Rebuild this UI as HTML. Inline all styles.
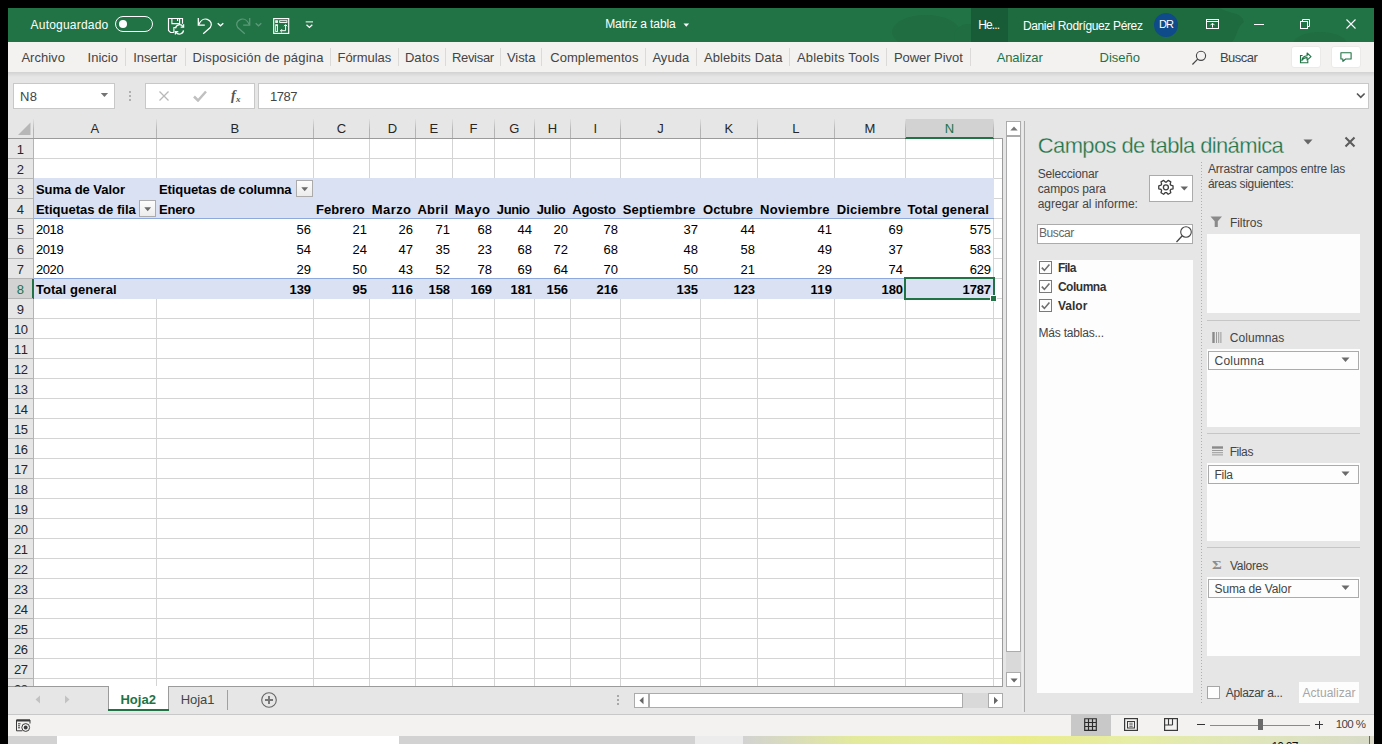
<!DOCTYPE html>
<html lang="es"><head><meta charset="utf-8"><title>Matriz a tabla - Excel</title>
<style>
html,body{margin:0;padding:0;background:#000;}
body{width:1382px;height:744px;overflow:hidden;position:relative;font-family:"Liberation Sans",sans-serif;}
#win{position:absolute;left:0;top:0;width:1382px;height:744px;overflow:hidden;}
#win div,#win span,#win svg{position:absolute;box-sizing:border-box;}
.t{white-space:pre;}

</style></head>
<body>
<div id=win>
<div style="left:8px;top:8px;width:1366px;height:728px;background:#e6e6e6;"></div>
<div style="left:8px;top:8px;width:1366px;height:34px;background:#217346;"></div>
<svg style="left:880px;top:8px;" width="494" height="34" viewBox="0 0 494 34"><ellipse cx='46' cy='24' rx='34' ry='17' fill='#1f6d41'/><circle cx='88' cy='30' r='14' fill='#1f6d41'/><path d='M128 0H340c10 6 22 4 24 14c-8 6-6 14-12 20H128z' fill='#1f6b40'/><ellipse cx='440' cy='38' rx='28' ry='14' fill='#1f6d41'/></svg>
<div style="left:971px;top:8px;width:37px;height:34px;background:#185c37;"></div>
<div style="left:115.3px;top:16px;width:37.5px;height:16px;border:1px solid #fff;border-radius:8px;"></div>
<div style="left:119px;top:20px;width:8px;height:8px;background:#fff;border-radius:50%;"></div>
<svg style="left:160px;top:10px;" width="160" height="30" viewBox="0 0 160 30"><path d='M13.900 22.500h-3.400l-2-2V8.500h14v5.300' fill='none' stroke='#fff' stroke-width='1.15'/><path d='M11.900 8.500v5.100h7.700v-5.100M17.600 8.500v2.600' fill='none' stroke='#fff' stroke-width='1.15'/><path d='M13.900 22.500v-5h2.300' fill='none' stroke='#fff' stroke-width='1.15'/><path d='M15.500 18.400a4.100 4.100 0 0 1 7.600-1.700M23.500 20.400a4.100 4.100 0 0 1-7.600 1.700' fill='none' stroke='#fff' stroke-width='1.250'/><path d='M23.600 14.200v2.900h-2.900M15.400 24.600v-2.900h2.900' fill='none' stroke='#fff' stroke-width='1.250'/><path d='M38.300 8v7h6.500' fill='none' stroke='#fff' stroke-width='1.250'/><path d='M38.800 14.500C40.500 10.500 44 8.300 47.300 9.300c3.800 1.300 5.200 5.200 3 8.200L43.200 23.700' fill='none' stroke='#fff' stroke-width='1.250'/><path d='M57.700 13.200l2.800 2.600 2.800-2.600' fill='none' stroke='#fff' stroke-width='1.300'/><path d='M89.700 8v7h-6.500' fill='none' stroke='#5c9977' stroke-width='1.250'/><path d='M89.200 14.500C87.500 10.500 84 8.300 80.700 9.300c-3.800 1.300-5.200 5.200-3 8.200L84.800 23.700' fill='none' stroke='#5c9977' stroke-width='1.250'/><path d='M95.700 13.200l2.800 2.600 2.800-2.600' fill='none' stroke='#5c9977' stroke-width='1.300'/><rect x='113.700' y='8.600' width='15' height='14.800' fill='none' stroke='#fff' stroke-width='1.15'/><rect x='115.700' y='10.700' width='1.800' height='1.800' fill='none' stroke='#fff' stroke-width='.9'/><rect x='119.700' y='10.700' width='7.200' height='1.800' fill='none' stroke='#fff' stroke-width='.9'/><rect x='115.700' y='14.700' width='1.800' height='6.800' fill='none' stroke='#fff' stroke-width='.9'/><path d='M125.600 15v5.700h-4.800M124 16.200l1.600-1.600 1.600 1.600M122 19.200l-1.600 1.600 1.600 1.600' fill='none' stroke='#fff' stroke-width='1'/><path d='M145.700 11.900h7.300' stroke='#fff' stroke-width='1'/><path d='M146.500 14.700l2.900 2.700 2.900-2.700' fill='none' stroke='#fff' stroke-width='1.300'/></svg>
<svg style="left:682.5px;top:22.5px;" width="8" height="5" viewBox="0 0 8 5"><path d='M0.5 0.5h5.600l-2.800 3.300z' fill='#fff'/></svg>
<div style="left:1154px;top:13px;width:24px;height:24px;background:#0f4a8a;border-radius:50%;"></div>
<svg style="left:1205px;top:18px;" width="16" height="12" viewBox="0 0 16 12"><rect x='1.5' y='1.5' width='12' height='9' fill='none' stroke='#fff' stroke-width='1'/><path d='M1.5 3.5h12' stroke='#fff'/><path d='M7.5 9.5v-4M5.5 7.2l2-2 2 2' fill='none' stroke='#fff'/></svg>
<div style="left:1254px;top:23.5px;width:10px;height:1px;background:#fff;"></div>
<svg style="left:1299px;top:18px;" width="12" height="12" viewBox="0 0 12 12"><rect x='1.5' y='3.5' width='7' height='7' fill='none' stroke='#fff'/><path d='M3.5 3.5v-2h7v7h-2' fill='none' stroke='#fff'/></svg>
<svg style="left:1345px;top:18px;" width="12" height="12" viewBox="0 0 12 12"><path d='M1.5 1.5l9 9M10.5 1.5l-9 9' stroke='#fff' stroke-width='1.1'/></svg>
<div style="left:8px;top:42px;width:1366px;height:30px;background:#f3f2f1;"></div>
<div style="left:8px;top:72px;width:1366px;height:5px;background:linear-gradient(#d2d2d2,#e6e6e6);"></div>
<div style="left:125px;top:48px;width:1px;height:18px;background:#dcdad8;"></div>
<div style="left:185px;top:48px;width:1px;height:18px;background:#dcdad8;"></div>
<div style="left:330px;top:48px;width:1px;height:18px;background:#dcdad8;"></div>
<div style="left:398px;top:48px;width:1px;height:18px;background:#dcdad8;"></div>
<div style="left:445px;top:48px;width:1px;height:18px;background:#dcdad8;"></div>
<div style="left:500px;top:48px;width:1px;height:18px;background:#dcdad8;"></div>
<div style="left:541px;top:48px;width:1px;height:18px;background:#dcdad8;"></div>
<div style="left:645px;top:48px;width:1px;height:18px;background:#dcdad8;"></div>
<div style="left:696px;top:48px;width:1px;height:18px;background:#dcdad8;"></div>
<div style="left:789px;top:48px;width:1px;height:18px;background:#dcdad8;"></div>
<div style="left:886px;top:48px;width:1px;height:18px;background:#dcdad8;"></div>
<div style="left:970px;top:48px;width:1px;height:18px;background:#dcdad8;"></div>
<svg style="left:1190px;top:48px;" width="18" height="18" viewBox="0 0 18 18"><circle cx='11' cy='7.800' r='4.600' fill='none' stroke='#444' stroke-width='1.100'/><path d='M7.700 11.200L2.400 16.500' stroke='#444' stroke-width='1.200'/></svg>
<div style="left:1291px;top:46px;width:30px;height:22px;background:#fff;border:1px solid #eceae8;border-radius:3px;"></div>
<div style="left:1330.5px;top:46px;width:30.5px;height:22px;background:#fff;border:1px solid #eceae8;border-radius:3px;"></div>
<svg style="left:1298px;top:50px;" width="16" height="15" viewBox="0 0 16 15"><path d='M4.600 5.500H2.500v7.300h7.300V10.200' fill='none' stroke='#217346' stroke-width='1.1'/><path d='M3.700 10.800c.4-3.200 2.200-4.800 5.400-5V3l3.900 3.600-3.900 3.600V7.600C6.300 7.700 4.700 8.600 3.700 10.800z' fill='none' stroke='#217346' stroke-width='1.1' stroke-linejoin='round'/></svg>
<svg style="left:1338px;top:50px;" width="16" height="15" viewBox="0 0 16 15"><path d='M2.900 2.700h10.200v6.300H7.600l-2.700 2.400V9H2.900z' fill='none' stroke='#217346' stroke-width='1.1' stroke-linejoin='round'/></svg>
<div style="left:13px;top:83px;width:102px;height:26px;background:#fff;border:1px solid #c8c8c8;"></div>
<svg style="left:100px;top:92px;" width="10" height="6" viewBox="0 0 10 6"><path d='M0.800 0.900h7.300l-3.650 4.100z' fill='#737373'/></svg>
<div style="left:129px;top:91px;width:2px;height:2px;background:#b0b0b0;"></div>
<div style="left:129px;top:95px;width:2px;height:2px;background:#b0b0b0;"></div>
<div style="left:129px;top:99px;width:2px;height:2px;background:#b0b0b0;"></div>
<div style="left:145px;top:83px;width:110px;height:26px;background:#fff;border:1px solid #c8c8c8;"></div>
<svg style="left:158px;top:90px;" width="12" height="12" viewBox="0 0 12 12"><path d='M1.500 1.500l9 9M10.500 1.500l-9 9' stroke='#b8b8b8' stroke-width='1.3'/></svg>
<svg style="left:193px;top:90px;" width="14" height="12" viewBox="0 0 14 12"><path d='M1 6.500l4 4L13 1.500' fill='none' stroke='#c0c0c0' stroke-width='2.500'/></svg>
<div style="left:258px;top:83px;width:1111px;height:26px;background:#fff;border:1px solid #c8c8c8;"></div>
<svg style="left:1356px;top:92px;" width="10" height="8" viewBox="0 0 10 8"><path d='M1 1.500l3.800 3.800L8.600 1.500' fill='none' stroke='#555' stroke-width='1.600'/></svg>
<div style="left:8px;top:119px;width:995px;height:568px;background:#e6e6e6;"></div>
<div style="left:34px;top:139px;width:969px;height:547px;background:#fff;"></div>
<div style="left:34px;top:158px;width:969px;height:1px;background:#d4d4d4;"></div>
<div style="left:34px;top:178px;width:969px;height:1px;background:#d4d4d4;"></div>
<div style="left:34px;top:198px;width:969px;height:1px;background:#d4d4d4;"></div>
<div style="left:34px;top:218px;width:969px;height:1px;background:#d4d4d4;"></div>
<div style="left:34px;top:238px;width:969px;height:1px;background:#d4d4d4;"></div>
<div style="left:34px;top:258px;width:969px;height:1px;background:#d4d4d4;"></div>
<div style="left:34px;top:278px;width:969px;height:1px;background:#d4d4d4;"></div>
<div style="left:34px;top:298px;width:969px;height:1px;background:#d4d4d4;"></div>
<div style="left:34px;top:318px;width:969px;height:1px;background:#d4d4d4;"></div>
<div style="left:34px;top:338px;width:969px;height:1px;background:#d4d4d4;"></div>
<div style="left:34px;top:358px;width:969px;height:1px;background:#d4d4d4;"></div>
<div style="left:34px;top:378px;width:969px;height:1px;background:#d4d4d4;"></div>
<div style="left:34px;top:398px;width:969px;height:1px;background:#d4d4d4;"></div>
<div style="left:34px;top:418px;width:969px;height:1px;background:#d4d4d4;"></div>
<div style="left:34px;top:438px;width:969px;height:1px;background:#d4d4d4;"></div>
<div style="left:34px;top:458px;width:969px;height:1px;background:#d4d4d4;"></div>
<div style="left:34px;top:478px;width:969px;height:1px;background:#d4d4d4;"></div>
<div style="left:34px;top:498px;width:969px;height:1px;background:#d4d4d4;"></div>
<div style="left:34px;top:518px;width:969px;height:1px;background:#d4d4d4;"></div>
<div style="left:34px;top:538px;width:969px;height:1px;background:#d4d4d4;"></div>
<div style="left:34px;top:558px;width:969px;height:1px;background:#d4d4d4;"></div>
<div style="left:34px;top:578px;width:969px;height:1px;background:#d4d4d4;"></div>
<div style="left:34px;top:598px;width:969px;height:1px;background:#d4d4d4;"></div>
<div style="left:34px;top:618px;width:969px;height:1px;background:#d4d4d4;"></div>
<div style="left:34px;top:638px;width:969px;height:1px;background:#d4d4d4;"></div>
<div style="left:34px;top:658px;width:969px;height:1px;background:#d4d4d4;"></div>
<div style="left:34px;top:678px;width:969px;height:1px;background:#d4d4d4;"></div>
<div style="left:156px;top:139px;width:1px;height:547px;background:#d4d4d4;"></div>
<div style="left:313px;top:139px;width:1px;height:547px;background:#d4d4d4;"></div>
<div style="left:369px;top:139px;width:1px;height:547px;background:#d4d4d4;"></div>
<div style="left:415px;top:139px;width:1px;height:547px;background:#d4d4d4;"></div>
<div style="left:452px;top:139px;width:1px;height:547px;background:#d4d4d4;"></div>
<div style="left:494px;top:139px;width:1px;height:547px;background:#d4d4d4;"></div>
<div style="left:534px;top:139px;width:1px;height:547px;background:#d4d4d4;"></div>
<div style="left:570px;top:139px;width:1px;height:547px;background:#d4d4d4;"></div>
<div style="left:620px;top:139px;width:1px;height:547px;background:#d4d4d4;"></div>
<div style="left:700px;top:139px;width:1px;height:547px;background:#d4d4d4;"></div>
<div style="left:757px;top:139px;width:1px;height:547px;background:#d4d4d4;"></div>
<div style="left:834px;top:139px;width:1px;height:547px;background:#d4d4d4;"></div>
<div style="left:905px;top:139px;width:1px;height:547px;background:#d4d4d4;"></div>
<div style="left:993px;top:139px;width:1px;height:547px;background:#d4d4d4;"></div>
<div style="left:34px;top:178px;width:960px;height:41px;background:#d9e1f2;"></div>
<div style="left:34px;top:219px;width:959px;height:60px;background:#fff;"></div>
<div style="left:34px;top:279px;width:960px;height:20px;background:#d9e1f2;"></div>
<div style="left:34px;top:218px;width:960px;height:1px;background:#8ea9db;"></div>
<div style="left:34px;top:278px;width:960px;height:1px;background:#8ea9db;"></div>
<div style="left:905px;top:119px;width:89px;height:18px;background:#d2d2d2;"></div>
<div style="left:905px;top:137px;width:89px;height:2px;background:#217346;"></div>
<div style="left:8px;top:138px;width:897px;height:1px;background:#9b9b9b;"></div>
<div style="left:994px;top:138px;width:9px;height:1px;background:#9b9b9b;"></div>
<div style="left:33px;top:119px;width:1px;height:19px;background:linear-gradient(#e0e0e0,#b4b4b4 55%);"></div>
<div style="left:156px;top:119px;width:1px;height:19px;background:linear-gradient(#e0e0e0,#b4b4b4 55%);"></div>
<div style="left:313px;top:119px;width:1px;height:19px;background:linear-gradient(#e0e0e0,#b4b4b4 55%);"></div>
<div style="left:369px;top:119px;width:1px;height:19px;background:linear-gradient(#e0e0e0,#b4b4b4 55%);"></div>
<div style="left:415px;top:119px;width:1px;height:19px;background:linear-gradient(#e0e0e0,#b4b4b4 55%);"></div>
<div style="left:452px;top:119px;width:1px;height:19px;background:linear-gradient(#e0e0e0,#b4b4b4 55%);"></div>
<div style="left:494px;top:119px;width:1px;height:19px;background:linear-gradient(#e0e0e0,#b4b4b4 55%);"></div>
<div style="left:534px;top:119px;width:1px;height:19px;background:linear-gradient(#e0e0e0,#b4b4b4 55%);"></div>
<div style="left:570px;top:119px;width:1px;height:19px;background:linear-gradient(#e0e0e0,#b4b4b4 55%);"></div>
<div style="left:620px;top:119px;width:1px;height:19px;background:linear-gradient(#e0e0e0,#b4b4b4 55%);"></div>
<div style="left:700px;top:119px;width:1px;height:19px;background:linear-gradient(#e0e0e0,#b4b4b4 55%);"></div>
<div style="left:757px;top:119px;width:1px;height:19px;background:linear-gradient(#e0e0e0,#b4b4b4 55%);"></div>
<div style="left:834px;top:119px;width:1px;height:19px;background:linear-gradient(#e0e0e0,#b4b4b4 55%);"></div>
<div style="left:905px;top:119px;width:1px;height:19px;background:linear-gradient(#e0e0e0,#b4b4b4 55%);"></div>
<div style="left:993px;top:119px;width:1px;height:19px;background:linear-gradient(#e0e0e0,#b4b4b4 55%);"></div>
<svg style="left:17px;top:122px;" width="15" height="14" viewBox="0 0 15 14"><path d='M13.500 0.500v12.500H1z' fill='#b7b7b7'/></svg>
<div style="left:8px;top:279px;width:24px;height:19px;background:#d2d2d2;"></div>
<div style="left:32px;top:279px;width:2px;height:20px;background:#217346;"></div>
<div style="left:33px;top:139px;width:1px;height:140px;background:#b4b4b4;"></div>
<div style="left:33px;top:299px;width:1px;height:387px;background:#b4b4b4;"></div>
<div style="left:8px;top:158px;width:25px;height:1px;background:#b4b4b4;"></div>
<div style="left:8px;top:178px;width:25px;height:1px;background:#b4b4b4;"></div>
<div style="left:8px;top:198px;width:25px;height:1px;background:#b4b4b4;"></div>
<div style="left:8px;top:218px;width:25px;height:1px;background:#b4b4b4;"></div>
<div style="left:8px;top:238px;width:25px;height:1px;background:#b4b4b4;"></div>
<div style="left:8px;top:258px;width:25px;height:1px;background:#b4b4b4;"></div>
<div style="left:8px;top:278px;width:25px;height:1px;background:#b4b4b4;"></div>
<div style="left:8px;top:298px;width:25px;height:1px;background:#b4b4b4;"></div>
<div style="left:8px;top:318px;width:25px;height:1px;background:#b4b4b4;"></div>
<div style="left:8px;top:338px;width:25px;height:1px;background:#b4b4b4;"></div>
<div style="left:8px;top:358px;width:25px;height:1px;background:#b4b4b4;"></div>
<div style="left:8px;top:378px;width:25px;height:1px;background:#b4b4b4;"></div>
<div style="left:8px;top:398px;width:25px;height:1px;background:#b4b4b4;"></div>
<div style="left:8px;top:418px;width:25px;height:1px;background:#b4b4b4;"></div>
<div style="left:8px;top:438px;width:25px;height:1px;background:#b4b4b4;"></div>
<div style="left:8px;top:458px;width:25px;height:1px;background:#b4b4b4;"></div>
<div style="left:8px;top:478px;width:25px;height:1px;background:#b4b4b4;"></div>
<div style="left:8px;top:498px;width:25px;height:1px;background:#b4b4b4;"></div>
<div style="left:8px;top:518px;width:25px;height:1px;background:#b4b4b4;"></div>
<div style="left:8px;top:538px;width:25px;height:1px;background:#b4b4b4;"></div>
<div style="left:8px;top:558px;width:25px;height:1px;background:#b4b4b4;"></div>
<div style="left:8px;top:578px;width:25px;height:1px;background:#b4b4b4;"></div>
<div style="left:8px;top:598px;width:25px;height:1px;background:#b4b4b4;"></div>
<div style="left:8px;top:618px;width:25px;height:1px;background:#b4b4b4;"></div>
<div style="left:8px;top:638px;width:25px;height:1px;background:#b4b4b4;"></div>
<div style="left:8px;top:658px;width:25px;height:1px;background:#b4b4b4;"></div>
<div style="left:8px;top:678px;width:25px;height:1px;background:#b4b4b4;"></div>
<div style="left:296px;top:180px;width:17px;height:17px;border:1px solid #ababab;background:linear-gradient(#fdfdfd,#ececec);"></div>
<svg style="left:301px;top:187px;" width="8" height="5" viewBox="0 0 8 5"><path d='M0.300 0.300h6.800l-3.400 4z' fill='#6a6a6a'/></svg>
<div style="left:139px;top:200px;width:17px;height:17px;border:1px solid #ababab;background:linear-gradient(#fdfdfd,#ececec);"></div>
<svg style="left:144px;top:207px;" width="8" height="5" viewBox="0 0 8 5"><path d='M0.300 0.300h6.800l-3.400 4z' fill='#6a6a6a'/></svg>
<div style="left:904px;top:277px;width:91px;height:23px;border:2px solid #217346;"></div>
<div style="left:990px;top:295px;width:7px;height:7px;background:#217346;border:1px solid #fff;"></div>
<div style="left:1002px;top:139px;width:1px;height:548px;background:#9b9b9b;"></div>
<div style="left:8px;top:686px;width:995px;height:1px;background:#9b9b9b;"></div>
<div style="left:1006px;top:121px;width:15px;height:15px;background:#fff;border:1px solid #ababab;"></div>
<svg style="left:1009.5px;top:125.5px;" width="9" height="6" viewBox="0 0 9 6"><path d='M0.300 4.500l3.700-4.100 3.700 4.100z' fill='#777'/></svg>
<div style="left:1006px;top:136px;width:15px;height:516px;background:#fff;border:1px solid #ababab;"></div>
<div style="left:1006px;top:652px;width:15px;height:20px;background:#d9d9d9;"></div>
<div style="left:1006px;top:672px;width:15px;height:15px;background:#fff;border:1px solid #ababab;"></div>
<svg style="left:1009.5px;top:677.5px;" width="9" height="6" viewBox="0 0 9 6"><path d='M0.500 0.400h7.200l-3.600 4z' fill='#686868'/></svg>
<div style="left:1024px;top:121px;width:1px;height:591px;background:#ababab;z-index:2;"></div>
<div style="left:1022px;top:121px;width:1px;height:591px;background:#ebebeb;z-index:2;"></div>
<svg style="left:1303px;top:139px;" width="11" height="7" viewBox="0 0 11 7"><path d='M0.500 0.500h9l-4.500 5z' fill='#666'/></svg>
<svg style="left:1344px;top:136px;" width="12" height="12" viewBox="0 0 12 12"><path d='M1.500 1.500l9 9M10.500 1.500l-9 9' stroke='#5c5c5c' stroke-width='2.100'/></svg>
<div style="left:1149px;top:175px;width:44px;height:27px;background:#fff;border:1px solid #ababab;"></div>
<svg style="left:1157px;top:179px;" width="18" height="17" viewBox="0 0 18 17"><path d='M13.74 6.14 L16.04 6.78 L16.04 9.82 L13.74 10.46 L13.19 11.42 L13.78 13.72 L11.16 15.24 L9.45 13.57 L8.35 13.57 L6.64 15.24 L4.02 13.72 L4.61 11.42 L4.06 10.46 L1.76 9.82 L1.76 6.78 L4.06 6.14 L4.61 5.18 L4.02 2.88 L6.64 1.36 L8.35 3.03 L9.45 3.03 L11.16 1.36 L13.78 2.88 L13.19 5.18z' fill='none' stroke='#3d3d3d' stroke-width='1.300' stroke-linejoin='round'/><circle cx='8.9' cy='8.3' r='2.500' fill='none' stroke='#3d3d3d' stroke-width='1.300'/></svg>
<svg style="left:1180px;top:186px;" width="9" height="5" viewBox="0 0 9 5"><path d='M0.500 0.500h7.500l-3.750 4z' fill='#666'/></svg>
<div style="left:1037px;top:224px;width:156px;height:20px;background:#fff;border:1px solid #ababab;"></div>
<svg style="left:1175px;top:225px;" width="18" height="18" viewBox="0 0 18 18"><circle cx='11' cy='7' r='5.300' fill='none' stroke='#444' stroke-width='1.100'/><path d='M7.300 10.800L1.500 17' stroke='#444' stroke-width='1.300'/></svg>
<div style="left:1037px;top:260px;width:156px;height:433px;background:#fdfdfd;"></div>
<div style="left:1039px;top:261px;width:13px;height:13px;background:#fdfdfd;border:1px solid #7a7a7a;"></div>
<svg style="left:1039px;top:261px;" width="13" height="13" viewBox="0 0 13 13"><path d='M2.800 6.600l2.600 2.800 5-6' fill='none' stroke='#6e6e6e' stroke-width='1.600'/></svg>
<div style="left:1039px;top:280px;width:13px;height:13px;background:#fdfdfd;border:1px solid #7a7a7a;"></div>
<svg style="left:1039px;top:280px;" width="13" height="13" viewBox="0 0 13 13"><path d='M2.800 6.600l2.600 2.800 5-6' fill='none' stroke='#6e6e6e' stroke-width='1.600'/></svg>
<div style="left:1039px;top:299px;width:13px;height:13px;background:#fdfdfd;border:1px solid #7a7a7a;"></div>
<svg style="left:1039px;top:299px;" width="13" height="13" viewBox="0 0 13 13"><path d='M2.800 6.600l2.600 2.800 5-6' fill='none' stroke='#6e6e6e' stroke-width='1.600'/></svg>
<div style="left:1201px;top:162px;width:1px;height:541px;background:repeating-linear-gradient(#b0b0b0 0,#b0b0b0 1px,transparent 1px,transparent 3px);"></div>
<div style="left:1207px;top:234px;width:153px;height:79px;background:#fdfdfd;"></div>
<div style="left:1207px;top:320px;width:153px;height:1px;background:#c6c6c6;"></div>
<svg style="left:1210px;top:216px;" width="13" height="12" viewBox="0 0 13 12"><path d='M0.500 0.500h11.500l-4.200 4.800v5.700h-3.100v-5.700z' fill='#8a8a8a'/></svg>
<svg style="left:1212px;top:332px;" width="11" height="11" viewBox="0 0 11 11"><path d='M1.500 0v11' stroke='#8a8a8a' stroke-width='2.400'/><path d='M4.500 0v11M6.700 0v11M8.900 0v11' stroke='#9a9a9a' stroke-width='1'/></svg>
<div style="left:1207px;top:349px;width:153px;height:78px;background:#fdfdfd;"></div>
<div style="left:1208px;top:351px;width:151px;height:19px;background:#fdfdfd;border:1px solid #ababab;"></div>
<svg style="left:1341px;top:357px;" width="9" height="6" viewBox="0 0 9 6"><path d='M0.500 0.500h8l-4 4.500z' fill='#6a6a6a'/></svg>
<div style="left:1207px;top:433px;width:153px;height:1px;background:#c6c6c6;"></div>
<svg style="left:1212px;top:446px;" width="12" height="11" viewBox="0 0 12 11"><path d='M0 1.500h11' stroke='#8a8a8a' stroke-width='2.400'/><path d='M0 4.500h11M0 6.700h11M0 8.900h11' stroke='#9a9a9a' stroke-width='1'/></svg>
<div style="left:1207px;top:463px;width:153px;height:78px;background:#fdfdfd;"></div>
<div style="left:1208px;top:465px;width:151px;height:19px;background:#fdfdfd;border:1px solid #ababab;"></div>
<svg style="left:1341px;top:471px;" width="9" height="6" viewBox="0 0 9 6"><path d='M0.500 0.500h8l-4 4.500z' fill='#6a6a6a'/></svg>
<div style="left:1207px;top:547px;width:153px;height:1px;background:#c6c6c6;"></div>
<div style="left:1207px;top:577px;width:153px;height:79px;background:#fdfdfd;"></div>
<div style="left:1208px;top:579px;width:151px;height:19px;background:#fdfdfd;border:1px solid #ababab;"></div>
<svg style="left:1341px;top:585px;" width="9" height="6" viewBox="0 0 9 6"><path d='M0.500 0.500h8l-4 4.500z' fill='#6a6a6a'/></svg>
<div style="left:1207px;top:686px;width:13px;height:13px;background:#fdfdfd;border:1px solid #a6a6a6;"></div>
<div style="left:1299px;top:682px;width:60px;height:21px;background:#fdfdfd;"></div>
<div style="left:8px;top:687px;width:1017px;height:27px;background:#e6e6e6;"></div>
<svg style="left:34.5px;top:695px;" width="6" height="9" viewBox="0 0 6 9"><path d='M5 0.500v8L0.500 4.500z' fill='#c2c2c2'/></svg>
<svg style="left:63.5px;top:695px;" width="6" height="9" viewBox="0 0 6 9"><path d='M1 0.500v8l4.500-4z' fill='#c2c2c2'/></svg>
<div style="left:108px;top:686px;width:61px;height:24px;background:#fff;"></div>
<div style="left:108px;top:686px;width:1px;height:23px;background:#9b9b9b;"></div>
<div style="left:168px;top:686px;width:1px;height:23px;background:#9b9b9b;"></div>
<div style="left:108px;top:709px;width:61px;height:2px;background:#217346;"></div>
<div style="left:227px;top:690px;width:1px;height:20px;background:#a0a0a0;"></div>
<svg style="left:260px;top:691px;" width="18" height="18" viewBox="0 0 18 18"><circle cx='9' cy='9' r='7.300' fill='none' stroke='#666' stroke-width='1.100'/><path d='M9 5v8M5 9h8' stroke='#757575' stroke-width='1.900'/></svg>
<div style="left:617px;top:695px;width:2px;height:2px;background:#a8a8a8;"></div>
<div style="left:617px;top:699px;width:2px;height:2px;background:#a8a8a8;"></div>
<div style="left:617px;top:703px;width:2px;height:2px;background:#a8a8a8;"></div>
<div style="left:634px;top:693px;width:15px;height:15px;background:#fff;border:1px solid #ababab;"></div>
<svg style="left:638.5px;top:696px;" width="6" height="9" viewBox="0 0 6 9"><path d='M4.500 0.800v7.400L0.500 4.500z' fill='#666'/></svg>
<div style="left:649px;top:693px;width:314px;height:15px;background:#fff;border:1px solid #ababab;"></div>
<div style="left:963px;top:693px;width:25px;height:15px;background:#d9d9d9;"></div>
<div style="left:988px;top:693px;width:15px;height:15px;background:#fff;border:1px solid #ababab;"></div>
<svg style="left:993px;top:696px;" width="6" height="9" viewBox="0 0 6 9"><path d='M1 0.800v7.400l4-3.700z' fill='#666'/></svg>
<div style="left:8px;top:714px;width:1366px;height:1px;background:#c8c8c8;"></div>
<div style="left:8px;top:715px;width:1366px;height:21px;background:#f3f2f1;"></div>
<svg style="left:16px;top:719px;" width="15" height="14" viewBox="0 0 15 14"><path d='M.5 1h13.500v3.500M.5 1v10.800h5.800' fill='none' stroke='#3a3a3a' stroke-width='1'/><path d='M.5 1.500h13.500' stroke='#3a3a3a' stroke-width='2'/><path d='M2 4.800h2.500M2 6.800h2M2 8.800h2' stroke='#3a3a3a' stroke-width='1'/><circle cx='9.700' cy='8.500' r='3.900' fill='#f3f2f1' stroke='#3a3a3a' stroke-width='1'/><circle cx='9.700' cy='8.500' r='1.900' fill='#3a3a3a'/></svg>
<div style="left:1071px;top:715px;width:40px;height:21px;background:#c8c8c8;"></div>
<svg style="left:1084px;top:718px;" width="13" height="13" viewBox="0 0 13 13"><path d='M.7 .7h11.600v11.600H.7zM.7 4.500h11.600M.7 8.500h11.600M4.500 .7v11.600M8.500 .7v11.600' fill='none' stroke='#2b2b2b' stroke-width='1.150'/></svg>
<svg style="left:1124px;top:718px;" width="14" height="13" viewBox="0 0 14 13"><rect x='.6' y='.6' width='12.800' height='11.800' fill='none' stroke='#3a3a3a' stroke-width='1.200'/><rect x='3.500' y='3.500' width='7' height='6.500' fill='none' stroke='#3a3a3a' stroke-width='1'/><path d='M5.300 5.200h3.400M5.300 6.800h3.400M5.300 8.400h3.400' fill='none' stroke='#3a3a3a' stroke-width='.7'/></svg>
<svg style="left:1164px;top:718px;" width="14" height="13" viewBox="0 0 14 13"><rect x='.6' y='.6' width='12.800' height='11.800' fill='none' stroke='#3a3a3a' stroke-width='1.200'/><path d='M4.500 .6v6.400M8.500 .6v6.400M.6 7h7.900' fill='none' stroke='#3a3a3a' stroke-width='1.100'/></svg>
<div style="left:1197px;top:723.5px;width:8px;height:1.3px;background:#333;"></div>
<div style="left:1210px;top:725px;width:100px;height:1px;background:#8a8a8a;"></div>
<div style="left:1258px;top:718.5px;width:5px;height:11.5px;background:#6a6a6a;"></div>
<div style="left:1315px;top:724px;width:8px;height:1px;background:#3a3a3a;"></div>
<div style="left:1318.5px;top:720.5px;width:1px;height:8px;background:#3a3a3a;"></div>
<div style="left:8px;top:736px;width:1366px;height:8px;background:#d2d2d2;"></div>
<div style="left:57px;top:736px;width:342px;height:8px;background:#fff;"></div>
<div style="left:695px;top:736px;width:48px;height:8px;background:#ececec;"></div>
<div style="left:743px;top:736px;width:626px;height:8px;background:linear-gradient(90deg,#d2d2d2 0,#e3ea9c 18%,#e6eda0 30%,#eaec8c 45%,#e6eda6 62%,#e0e6b8 80%,#d8dcc8 100%);"></div>
<div style="left:1369px;top:736px;width:1px;height:8px;background:#666;"></div>
<div style="left:1370px;top:736px;width:4px;height:8px;background:#dddccb;"></div>
<span class=t style="left:30.6px;top:17px;font-size:12px;line-height:16px;height:16px;font-weight:400;color:#fff;letter-spacing:0.20px;">Autoguardado</span>
<span class=t style="left:605.2px;top:16px;font-size:12px;line-height:16px;height:16px;font-weight:400;color:#fff;letter-spacing:-0.12px;">Matriz a tabla</span>
<span class=t style="left:978.3px;top:17px;font-size:12px;line-height:16px;height:16px;font-weight:400;color:#fff;letter-spacing:-0.89px;">He...</span>
<span class=t style="left:1022.9px;top:18px;font-size:12px;line-height:16px;height:16px;font-weight:400;color:#fff;letter-spacing:-0.35px;">Daniel Rodríguez Pérez</span>
<span class=t style="left:1158.9px;top:17px;font-size:11px;line-height:14px;height:14px;font-weight:400;color:#fff;letter-spacing:-0.90px;">DR</span>
<span class=t style="left:21.4px;top:49px;font-size:13px;line-height:17px;height:17px;font-weight:400;color:#444;letter-spacing:0.02px;">Archivo</span>
<span class=t style="left:87.6px;top:49px;font-size:13px;line-height:17px;height:17px;font-weight:400;color:#444;letter-spacing:-0.01px;">Inicio</span>
<span class=t style="left:133.2px;top:49px;font-size:13px;line-height:17px;height:17px;font-weight:400;color:#444;letter-spacing:-0.01px;">Insertar</span>
<span class=t style="left:192.6px;top:49px;font-size:13px;line-height:17px;height:17px;font-weight:400;color:#444;letter-spacing:0.18px;">Disposición de página</span>
<span class=t style="left:337.6px;top:49px;font-size:13px;line-height:17px;height:17px;font-weight:400;color:#444;letter-spacing:-0.08px;">Fórmulas</span>
<span class=t style="left:404.9px;top:49px;font-size:13px;line-height:17px;height:17px;font-weight:400;color:#444;letter-spacing:0.08px;">Datos</span>
<span class=t style="left:451.9px;top:49px;font-size:13px;line-height:17px;height:17px;font-weight:400;color:#444;letter-spacing:-0.30px;">Revisar</span>
<span class=t style="left:506.9px;top:49px;font-size:13px;line-height:17px;height:17px;font-weight:400;color:#444;letter-spacing:-0.04px;">Vista</span>
<span class=t style="left:550.2px;top:49px;font-size:13px;line-height:17px;height:17px;font-weight:400;color:#444;letter-spacing:0.07px;">Complementos</span>
<span class=t style="left:652.4px;top:49px;font-size:13px;line-height:17px;height:17px;font-weight:400;color:#444;letter-spacing:0.04px;">Ayuda</span>
<span class=t style="left:703.9px;top:49px;font-size:13px;line-height:17px;height:17px;font-weight:400;color:#444;letter-spacing:0.10px;">Ablebits Data</span>
<span class=t style="left:796.9px;top:49px;font-size:13px;line-height:17px;height:17px;font-weight:400;color:#444;letter-spacing:0.19px;">Ablebits Tools</span>
<span class=t style="left:893.9px;top:49px;font-size:13px;line-height:17px;height:17px;font-weight:400;color:#444;letter-spacing:-0.04px;">Power Pivot</span>
<span class=t style="left:996.7px;top:49px;font-size:13px;line-height:17px;height:17px;font-weight:400;color:#217346;letter-spacing:-0.12px;">Analizar</span>
<span class=t style="left:1099.6px;top:49px;font-size:13px;line-height:17px;height:17px;font-weight:400;color:#217346;letter-spacing:-0.03px;">Diseño</span>
<span class=t style="left:1219.9px;top:49px;font-size:13px;line-height:17px;height:17px;font-weight:400;color:#444;letter-spacing:-0.51px;">Buscar</span>
<span class=t style="left:19.9px;top:88px;font-size:13px;line-height:17px;height:17px;font-weight:400;color:#444;letter-spacing:0.38px;">N8</span>
<span class=t style="left:230.9px;top:87px;font-size:14px;line-height:18px;height:18px;font-weight:400;color:#555;letter-spacing:0.00px;font-family:'Liberation Serif',serif;font-style:italic;font-weight:700;">f</span>
<span class=t style="left:235.9px;top:93px;font-size:9px;line-height:12px;height:12px;font-weight:400;color:#555;letter-spacing:0.00px;font-family:'Liberation Serif',serif;font-style:italic;font-weight:700;">x</span>
<span class=t style="left:270.1px;top:88px;font-size:13px;line-height:17px;height:17px;font-weight:400;color:#444;letter-spacing:-0.54px;">1787</span>
<span class=t style="left:90.4px;top:120px;font-size:13px;line-height:17px;height:17px;font-weight:400;color:#262626;letter-spacing:0.00px;width:20px;text-align:center;margin-left:-5.5px;">A</span>
<span class=t style="left:230.4px;top:120px;font-size:13px;line-height:17px;height:17px;font-weight:400;color:#262626;letter-spacing:0.00px;width:20px;text-align:center;margin-left:-5.5px;">B</span>
<span class=t style="left:336.9px;top:120px;font-size:13px;line-height:17px;height:17px;font-weight:400;color:#262626;letter-spacing:0.00px;width:20px;text-align:center;margin-left:-5.5px;">C</span>
<span class=t style="left:387.9px;top:120px;font-size:13px;line-height:17px;height:17px;font-weight:400;color:#262626;letter-spacing:0.00px;width:20px;text-align:center;margin-left:-5.5px;">D</span>
<span class=t style="left:429.4px;top:120px;font-size:13px;line-height:17px;height:17px;font-weight:400;color:#262626;letter-spacing:0.00px;width:20px;text-align:center;margin-left:-5.5px;">E</span>
<span class=t style="left:468.9px;top:120px;font-size:13px;line-height:17px;height:17px;font-weight:400;color:#262626;letter-spacing:0.00px;width:20px;text-align:center;margin-left:-5.5px;">F</span>
<span class=t style="left:509.9px;top:120px;font-size:13px;line-height:17px;height:17px;font-weight:400;color:#262626;letter-spacing:0.00px;width:20px;text-align:center;margin-left:-5.5px;">G</span>
<span class=t style="left:547.9px;top:120px;font-size:13px;line-height:17px;height:17px;font-weight:400;color:#262626;letter-spacing:0.00px;width:20px;text-align:center;margin-left:-5.5px;">H</span>
<span class=t style="left:590.9px;top:120px;font-size:13px;line-height:17px;height:17px;font-weight:400;color:#262626;letter-spacing:0.00px;width:20px;text-align:center;margin-left:-5.5px;">I</span>
<span class=t style="left:655.9px;top:120px;font-size:13px;line-height:17px;height:17px;font-weight:400;color:#262626;letter-spacing:0.00px;width:20px;text-align:center;margin-left:-5.5px;">J</span>
<span class=t style="left:724.4px;top:120px;font-size:13px;line-height:17px;height:17px;font-weight:400;color:#262626;letter-spacing:0.00px;width:20px;text-align:center;margin-left:-5.5px;">K</span>
<span class=t style="left:791.4px;top:120px;font-size:13px;line-height:17px;height:17px;font-weight:400;color:#262626;letter-spacing:0.00px;width:20px;text-align:center;margin-left:-5.5px;">L</span>
<span class=t style="left:865.4px;top:120px;font-size:13px;line-height:17px;height:17px;font-weight:400;color:#262626;letter-spacing:0.00px;width:20px;text-align:center;margin-left:-5.5px;">M</span>
<span class=t style="left:944.9px;top:120px;font-size:13px;line-height:17px;height:17px;font-weight:400;color:#217346;letter-spacing:0.00px;width:20px;text-align:center;margin-left:-5.5px;">N</span>
<span class=t style="left:16.7px;top:141px;font-size:13px;line-height:17px;height:17px;font-weight:400;color:#262626;letter-spacing:0.00px;">1</span>
<span class=t style="left:16.7px;top:161px;font-size:13px;line-height:17px;height:17px;font-weight:400;color:#262626;letter-spacing:0.00px;">2</span>
<span class=t style="left:16.7px;top:181px;font-size:13px;line-height:17px;height:17px;font-weight:400;color:#262626;letter-spacing:0.00px;">3</span>
<span class=t style="left:16.7px;top:201px;font-size:13px;line-height:17px;height:17px;font-weight:400;color:#262626;letter-spacing:0.00px;">4</span>
<span class=t style="left:16.7px;top:221px;font-size:13px;line-height:17px;height:17px;font-weight:400;color:#262626;letter-spacing:0.00px;">5</span>
<span class=t style="left:16.7px;top:241px;font-size:13px;line-height:17px;height:17px;font-weight:400;color:#262626;letter-spacing:0.00px;">6</span>
<span class=t style="left:16.7px;top:261px;font-size:13px;line-height:17px;height:17px;font-weight:400;color:#262626;letter-spacing:0.00px;">7</span>
<span class=t style="left:16.7px;top:281px;font-size:13px;line-height:17px;height:17px;font-weight:400;color:#217346;letter-spacing:0.00px;">8</span>
<span class=t style="left:16.7px;top:301px;font-size:13px;line-height:17px;height:17px;font-weight:400;color:#262626;letter-spacing:0.00px;">9</span>
<span class=t style="left:14.0px;top:321px;font-size:13px;line-height:17px;height:17px;font-weight:400;color:#262626;letter-spacing:-0.37px;">10</span>
<span class=t style="left:14.0px;top:341px;font-size:13px;line-height:17px;height:17px;font-weight:400;color:#262626;letter-spacing:0.60px;">11</span>
<span class=t style="left:14.0px;top:361px;font-size:13px;line-height:17px;height:17px;font-weight:400;color:#262626;letter-spacing:-0.37px;">12</span>
<span class=t style="left:14.0px;top:381px;font-size:13px;line-height:17px;height:17px;font-weight:400;color:#262626;letter-spacing:-0.37px;">13</span>
<span class=t style="left:14.0px;top:401px;font-size:13px;line-height:17px;height:17px;font-weight:400;color:#262626;letter-spacing:-0.37px;">14</span>
<span class=t style="left:14.0px;top:421px;font-size:13px;line-height:17px;height:17px;font-weight:400;color:#262626;letter-spacing:-0.37px;">15</span>
<span class=t style="left:14.0px;top:441px;font-size:13px;line-height:17px;height:17px;font-weight:400;color:#262626;letter-spacing:-0.37px;">16</span>
<span class=t style="left:14.0px;top:461px;font-size:13px;line-height:17px;height:17px;font-weight:400;color:#262626;letter-spacing:-0.37px;">17</span>
<span class=t style="left:14.0px;top:481px;font-size:13px;line-height:17px;height:17px;font-weight:400;color:#262626;letter-spacing:-0.37px;">18</span>
<span class=t style="left:14.0px;top:501px;font-size:13px;line-height:17px;height:17px;font-weight:400;color:#262626;letter-spacing:-0.37px;">19</span>
<span class=t style="left:14.0px;top:521px;font-size:13px;line-height:17px;height:17px;font-weight:400;color:#262626;letter-spacing:-0.37px;">20</span>
<span class=t style="left:14.0px;top:541px;font-size:13px;line-height:17px;height:17px;font-weight:400;color:#262626;letter-spacing:-0.37px;">21</span>
<span class=t style="left:14.0px;top:561px;font-size:13px;line-height:17px;height:17px;font-weight:400;color:#262626;letter-spacing:-0.37px;">22</span>
<span class=t style="left:14.0px;top:581px;font-size:13px;line-height:17px;height:17px;font-weight:400;color:#262626;letter-spacing:-0.37px;">23</span>
<span class=t style="left:14.0px;top:601px;font-size:13px;line-height:17px;height:17px;font-weight:400;color:#262626;letter-spacing:-0.37px;">24</span>
<span class=t style="left:14.0px;top:621px;font-size:13px;line-height:17px;height:17px;font-weight:400;color:#262626;letter-spacing:-0.37px;">25</span>
<span class=t style="left:14.0px;top:641px;font-size:13px;line-height:17px;height:17px;font-weight:400;color:#262626;letter-spacing:-0.37px;">26</span>
<span class=t style="left:14.0px;top:661px;font-size:13px;line-height:17px;height:17px;font-weight:400;color:#262626;letter-spacing:-0.37px;">27</span>
<span class=t style="left:14.0px;top:681px;font-size:13px;line-height:17px;height:17px;font-weight:400;color:#262626;letter-spacing:-0.37px;clip-path:inset(0 0 11.5px 0);">28</span>
<span class=t style="left:35.9px;top:181px;font-size:13px;line-height:17px;height:17px;font-weight:700;color:#000;letter-spacing:-0.04px;">Suma de Valor</span>
<span class=t style="left:159.0px;top:181px;font-size:13px;line-height:17px;height:17px;font-weight:700;color:#000;letter-spacing:-0.10px;">Etiquetas de columna</span>
<span class=t style="left:35.9px;top:201px;font-size:13px;line-height:17px;height:17px;font-weight:700;color:#000;letter-spacing:0.01px;">Etiquetas de fila</span>
<span class=t style="left:159.0px;top:201px;font-size:13px;line-height:17px;height:17px;font-weight:700;color:#000;letter-spacing:-0.24px;">Enero</span>
<span class=t style="left:315.9px;top:201px;font-size:13px;line-height:17px;height:17px;font-weight:700;color:#000;letter-spacing:0.07px;">Febrero</span>
<span class=t style="left:371.8px;top:201px;font-size:13px;line-height:17px;height:17px;font-weight:700;color:#000;letter-spacing:0.41px;">Marzo</span>
<span class=t style="left:417.5px;top:201px;font-size:13px;line-height:17px;height:17px;font-weight:700;color:#000;letter-spacing:0.22px;">Abril</span>
<span class=t style="left:454.8px;top:201px;font-size:13px;line-height:17px;height:17px;font-weight:700;color:#000;letter-spacing:0.66px;">Mayo</span>
<span class=t style="left:496.8px;top:201px;font-size:13px;line-height:17px;height:17px;font-weight:700;color:#000;letter-spacing:-0.39px;">Junio</span>
<span class=t style="left:536.7px;top:201px;font-size:13px;line-height:17px;height:17px;font-weight:700;color:#000;letter-spacing:-0.31px;">Julio</span>
<span class=t style="left:572.3px;top:201px;font-size:13px;line-height:17px;height:17px;font-weight:700;color:#000;letter-spacing:-0.24px;">Agosto</span>
<span class=t style="left:622.7px;top:201px;font-size:13px;line-height:17px;height:17px;font-weight:700;color:#000;letter-spacing:0.22px;">Septiembre</span>
<span class=t style="left:703.1px;top:201px;font-size:13px;line-height:17px;height:17px;font-weight:700;color:#000;letter-spacing:0.01px;">Octubre</span>
<span class=t style="left:760.1px;top:201px;font-size:13px;line-height:17px;height:17px;font-weight:700;color:#000;letter-spacing:0.29px;">Noviembre</span>
<span class=t style="left:836.7px;top:201px;font-size:13px;line-height:17px;height:17px;font-weight:700;color:#000;letter-spacing:0.17px;">Diciembre</span>
<span class=t style="left:907.4px;top:201px;font-size:13px;line-height:17px;height:17px;font-weight:700;color:#000;letter-spacing:0.12px;">Total general</span>
<span class=t style="left:35.9px;top:221px;font-size:13px;line-height:17px;height:17px;font-weight:400;color:#000;letter-spacing:-0.37px;">2018</span>
<span class=t style="left:296.6px;top:221px;font-size:13px;line-height:17px;height:17px;font-weight:400;color:#000;letter-spacing:-0.07px;">56</span>
<span class=t style="left:352.6px;top:221px;font-size:13px;line-height:17px;height:17px;font-weight:400;color:#000;letter-spacing:-0.07px;">21</span>
<span class=t style="left:398.6px;top:221px;font-size:13px;line-height:17px;height:17px;font-weight:400;color:#000;letter-spacing:-0.07px;">26</span>
<span class=t style="left:435.6px;top:221px;font-size:13px;line-height:17px;height:17px;font-weight:400;color:#000;letter-spacing:-0.07px;">71</span>
<span class=t style="left:477.6px;top:221px;font-size:13px;line-height:17px;height:17px;font-weight:400;color:#000;letter-spacing:-0.07px;">68</span>
<span class=t style="left:517.6px;top:221px;font-size:13px;line-height:17px;height:17px;font-weight:400;color:#000;letter-spacing:-0.07px;">44</span>
<span class=t style="left:553.6px;top:221px;font-size:13px;line-height:17px;height:17px;font-weight:400;color:#000;letter-spacing:-0.07px;">20</span>
<span class=t style="left:603.6px;top:221px;font-size:13px;line-height:17px;height:17px;font-weight:400;color:#000;letter-spacing:-0.07px;">78</span>
<span class=t style="left:683.6px;top:221px;font-size:13px;line-height:17px;height:17px;font-weight:400;color:#000;letter-spacing:-0.07px;">37</span>
<span class=t style="left:740.6px;top:221px;font-size:13px;line-height:17px;height:17px;font-weight:400;color:#000;letter-spacing:-0.07px;">44</span>
<span class=t style="left:817.6px;top:221px;font-size:13px;line-height:17px;height:17px;font-weight:400;color:#000;letter-spacing:-0.07px;">41</span>
<span class=t style="left:888.6px;top:221px;font-size:13px;line-height:17px;height:17px;font-weight:400;color:#000;letter-spacing:-0.07px;">69</span>
<span class=t style="left:969.7px;top:221px;font-size:13px;line-height:17px;height:17px;font-weight:400;color:#000;letter-spacing:-0.20px;">575</span>
<span class=t style="left:35.9px;top:241px;font-size:13px;line-height:17px;height:17px;font-weight:400;color:#000;letter-spacing:-0.37px;">2019</span>
<span class=t style="left:296.6px;top:241px;font-size:13px;line-height:17px;height:17px;font-weight:400;color:#000;letter-spacing:-0.07px;">54</span>
<span class=t style="left:352.6px;top:241px;font-size:13px;line-height:17px;height:17px;font-weight:400;color:#000;letter-spacing:-0.07px;">24</span>
<span class=t style="left:398.6px;top:241px;font-size:13px;line-height:17px;height:17px;font-weight:400;color:#000;letter-spacing:-0.07px;">47</span>
<span class=t style="left:435.6px;top:241px;font-size:13px;line-height:17px;height:17px;font-weight:400;color:#000;letter-spacing:-0.07px;">35</span>
<span class=t style="left:477.6px;top:241px;font-size:13px;line-height:17px;height:17px;font-weight:400;color:#000;letter-spacing:-0.07px;">23</span>
<span class=t style="left:517.6px;top:241px;font-size:13px;line-height:17px;height:17px;font-weight:400;color:#000;letter-spacing:-0.07px;">68</span>
<span class=t style="left:553.6px;top:241px;font-size:13px;line-height:17px;height:17px;font-weight:400;color:#000;letter-spacing:-0.07px;">72</span>
<span class=t style="left:603.6px;top:241px;font-size:13px;line-height:17px;height:17px;font-weight:400;color:#000;letter-spacing:-0.07px;">68</span>
<span class=t style="left:683.6px;top:241px;font-size:13px;line-height:17px;height:17px;font-weight:400;color:#000;letter-spacing:-0.07px;">48</span>
<span class=t style="left:740.6px;top:241px;font-size:13px;line-height:17px;height:17px;font-weight:400;color:#000;letter-spacing:-0.07px;">58</span>
<span class=t style="left:817.6px;top:241px;font-size:13px;line-height:17px;height:17px;font-weight:400;color:#000;letter-spacing:-0.07px;">49</span>
<span class=t style="left:888.6px;top:241px;font-size:13px;line-height:17px;height:17px;font-weight:400;color:#000;letter-spacing:-0.07px;">37</span>
<span class=t style="left:969.7px;top:241px;font-size:13px;line-height:17px;height:17px;font-weight:400;color:#000;letter-spacing:-0.20px;">583</span>
<span class=t style="left:35.9px;top:261px;font-size:13px;line-height:17px;height:17px;font-weight:400;color:#000;letter-spacing:-0.37px;">2020</span>
<span class=t style="left:296.6px;top:261px;font-size:13px;line-height:17px;height:17px;font-weight:400;color:#000;letter-spacing:-0.07px;">29</span>
<span class=t style="left:352.6px;top:261px;font-size:13px;line-height:17px;height:17px;font-weight:400;color:#000;letter-spacing:-0.07px;">50</span>
<span class=t style="left:398.6px;top:261px;font-size:13px;line-height:17px;height:17px;font-weight:400;color:#000;letter-spacing:-0.07px;">43</span>
<span class=t style="left:435.6px;top:261px;font-size:13px;line-height:17px;height:17px;font-weight:400;color:#000;letter-spacing:-0.07px;">52</span>
<span class=t style="left:477.6px;top:261px;font-size:13px;line-height:17px;height:17px;font-weight:400;color:#000;letter-spacing:-0.07px;">78</span>
<span class=t style="left:517.6px;top:261px;font-size:13px;line-height:17px;height:17px;font-weight:400;color:#000;letter-spacing:-0.07px;">69</span>
<span class=t style="left:553.6px;top:261px;font-size:13px;line-height:17px;height:17px;font-weight:400;color:#000;letter-spacing:-0.07px;">64</span>
<span class=t style="left:603.6px;top:261px;font-size:13px;line-height:17px;height:17px;font-weight:400;color:#000;letter-spacing:-0.07px;">70</span>
<span class=t style="left:683.6px;top:261px;font-size:13px;line-height:17px;height:17px;font-weight:400;color:#000;letter-spacing:-0.07px;">50</span>
<span class=t style="left:740.6px;top:261px;font-size:13px;line-height:17px;height:17px;font-weight:400;color:#000;letter-spacing:-0.07px;">21</span>
<span class=t style="left:817.6px;top:261px;font-size:13px;line-height:17px;height:17px;font-weight:400;color:#000;letter-spacing:-0.07px;">29</span>
<span class=t style="left:888.6px;top:261px;font-size:13px;line-height:17px;height:17px;font-weight:400;color:#000;letter-spacing:-0.07px;">74</span>
<span class=t style="left:969.7px;top:261px;font-size:13px;line-height:17px;height:17px;font-weight:400;color:#000;letter-spacing:-0.20px;">629</span>
<span class=t style="left:35.9px;top:281px;font-size:13px;line-height:17px;height:17px;font-weight:700;color:#000;letter-spacing:0.06px;">Total general</span>
<span class=t style="left:289.5px;top:281px;font-size:13px;line-height:17px;height:17px;font-weight:700;color:#000;letter-spacing:-0.10px;">139</span>
<span class=t style="left:352.4px;top:281px;font-size:13px;line-height:17px;height:17px;font-weight:700;color:#000;letter-spacing:0.13px;">95</span>
<span class=t style="left:391.5px;top:281px;font-size:13px;line-height:17px;height:17px;font-weight:700;color:#000;letter-spacing:0.26px;">116</span>
<span class=t style="left:428.5px;top:281px;font-size:13px;line-height:17px;height:17px;font-weight:700;color:#000;letter-spacing:-0.10px;">158</span>
<span class=t style="left:470.5px;top:281px;font-size:13px;line-height:17px;height:17px;font-weight:700;color:#000;letter-spacing:-0.10px;">169</span>
<span class=t style="left:510.5px;top:281px;font-size:13px;line-height:17px;height:17px;font-weight:700;color:#000;letter-spacing:-0.10px;">181</span>
<span class=t style="left:546.5px;top:281px;font-size:13px;line-height:17px;height:17px;font-weight:700;color:#000;letter-spacing:-0.10px;">156</span>
<span class=t style="left:596.5px;top:281px;font-size:13px;line-height:17px;height:17px;font-weight:700;color:#000;letter-spacing:-0.10px;">216</span>
<span class=t style="left:676.5px;top:281px;font-size:13px;line-height:17px;height:17px;font-weight:700;color:#000;letter-spacing:-0.10px;">135</span>
<span class=t style="left:733.5px;top:281px;font-size:13px;line-height:17px;height:17px;font-weight:700;color:#000;letter-spacing:-0.10px;">123</span>
<span class=t style="left:810.5px;top:281px;font-size:13px;line-height:17px;height:17px;font-weight:700;color:#000;letter-spacing:0.26px;">119</span>
<span class=t style="left:881.5px;top:281px;font-size:13px;line-height:17px;height:17px;font-weight:700;color:#000;letter-spacing:-0.10px;">180</span>
<span class=t style="left:962.6px;top:281px;font-size:13px;line-height:17px;height:17px;font-weight:700;color:#000;letter-spacing:-0.17px;">1787</span>
<span class=t style="left:1037.8px;top:132px;font-size:22px;line-height:27px;height:27px;font-weight:400;color:#217346;letter-spacing:-0.63px;-webkit-text-stroke:0.3px #e6e6e6;">Campos de tabla dinámica</span>
<span class=t style="left:1037.7px;top:166px;font-size:12px;line-height:16px;height:16px;font-weight:400;color:#444;letter-spacing:-0.19px;">Seleccionar</span>
<span class=t style="left:1037.7px;top:181px;font-size:12px;line-height:16px;height:16px;font-weight:400;color:#444;letter-spacing:-0.11px;">campos para</span>
<span class=t style="left:1037.7px;top:196px;font-size:12px;line-height:16px;height:16px;font-weight:400;color:#444;letter-spacing:-0.03px;">agregar al informe:</span>
<span class=t style="left:1039.0px;top:225px;font-size:12px;line-height:16px;height:16px;font-weight:400;color:#666;letter-spacing:-0.43px;">Buscar</span>
<span class=t style="left:1057.9px;top:260px;font-size:12px;line-height:16px;height:16px;font-weight:700;color:#333;letter-spacing:-0.72px;">Fila</span>
<span class=t style="left:1057.9px;top:279px;font-size:12px;line-height:16px;height:16px;font-weight:700;color:#333;letter-spacing:-0.47px;">Columna</span>
<span class=t style="left:1057.9px;top:298px;font-size:12px;line-height:16px;height:16px;font-weight:700;color:#333;letter-spacing:0.04px;">Valor</span>
<span class=t style="left:1038.6px;top:325px;font-size:12px;line-height:16px;height:16px;font-weight:400;color:#444;letter-spacing:-0.22px;">Más tablas...</span>
<span class=t style="left:1207.9px;top:161px;font-size:12px;line-height:16px;height:16px;font-weight:400;color:#444;letter-spacing:-0.16px;">Arrastrar campos entre las</span>
<span class=t style="left:1207.9px;top:176px;font-size:12px;line-height:16px;height:16px;font-weight:400;color:#444;letter-spacing:-0.30px;">áreas siguientes:</span>
<span class=t style="left:1229.9px;top:215px;font-size:12px;line-height:16px;height:16px;font-weight:400;color:#444;letter-spacing:-0.03px;">Filtros</span>
<span class=t style="left:1229.7px;top:330px;font-size:12px;line-height:16px;height:16px;font-weight:400;color:#444;letter-spacing:0.08px;">Columnas</span>
<span class=t style="left:1214.6px;top:353px;font-size:12px;line-height:16px;height:16px;font-weight:400;color:#444;letter-spacing:0.21px;">Columna</span>
<span class=t style="left:1229.7px;top:444px;font-size:12px;line-height:16px;height:16px;font-weight:400;color:#444;letter-spacing:-0.41px;">Filas</span>
<span class=t style="left:1214.6px;top:467px;font-size:12px;line-height:16px;height:16px;font-weight:400;color:#444;letter-spacing:-0.35px;">Fila</span>
<span class=t style="left:1212.4px;top:556px;font-size:13.5px;line-height:17px;height:17px;font-weight:700;color:#8c8c8c;letter-spacing:0.00px;font-family:'Liberation Serif',serif;transform:scaleX(1.1);transform-origin:0 0;">Σ</span>
<span class=t style="left:1229.9px;top:558px;font-size:12px;line-height:16px;height:16px;font-weight:400;color:#444;letter-spacing:-0.25px;">Valores</span>
<span class=t style="left:1214.6px;top:581px;font-size:12px;line-height:16px;height:16px;font-weight:400;color:#444;letter-spacing:-0.14px;">Suma de Valor</span>
<span class=t style="left:1225.8px;top:685px;font-size:12px;line-height:16px;height:16px;font-weight:400;color:#444;letter-spacing:-0.33px;">Aplazar a...</span>
<span class=t style="left:1302.6px;top:685px;font-size:12px;line-height:16px;height:16px;font-weight:400;color:#a6a6a6;letter-spacing:0.01px;">Actualizar</span>
<span class=t style="left:120.4px;top:691px;font-size:13px;line-height:17px;height:17px;font-weight:700;color:#217346;letter-spacing:0.07px;">Hoja2</span>
<span class=t style="left:180.7px;top:691px;font-size:13px;line-height:17px;height:17px;font-weight:400;color:#444;letter-spacing:-0.07px;">Hoja1</span>
<span class=t style="left:1335.7px;top:717px;font-size:11.5px;line-height:14px;height:14px;font-weight:400;color:#444;letter-spacing:-0.58px;">100 %</span>
<span class=t style="left:1271.4px;top:739px;font-size:12px;line-height:16px;height:16px;font-weight:400;color:#111;letter-spacing:-0.76px;">10:27</span>
</div>
</body></html>
